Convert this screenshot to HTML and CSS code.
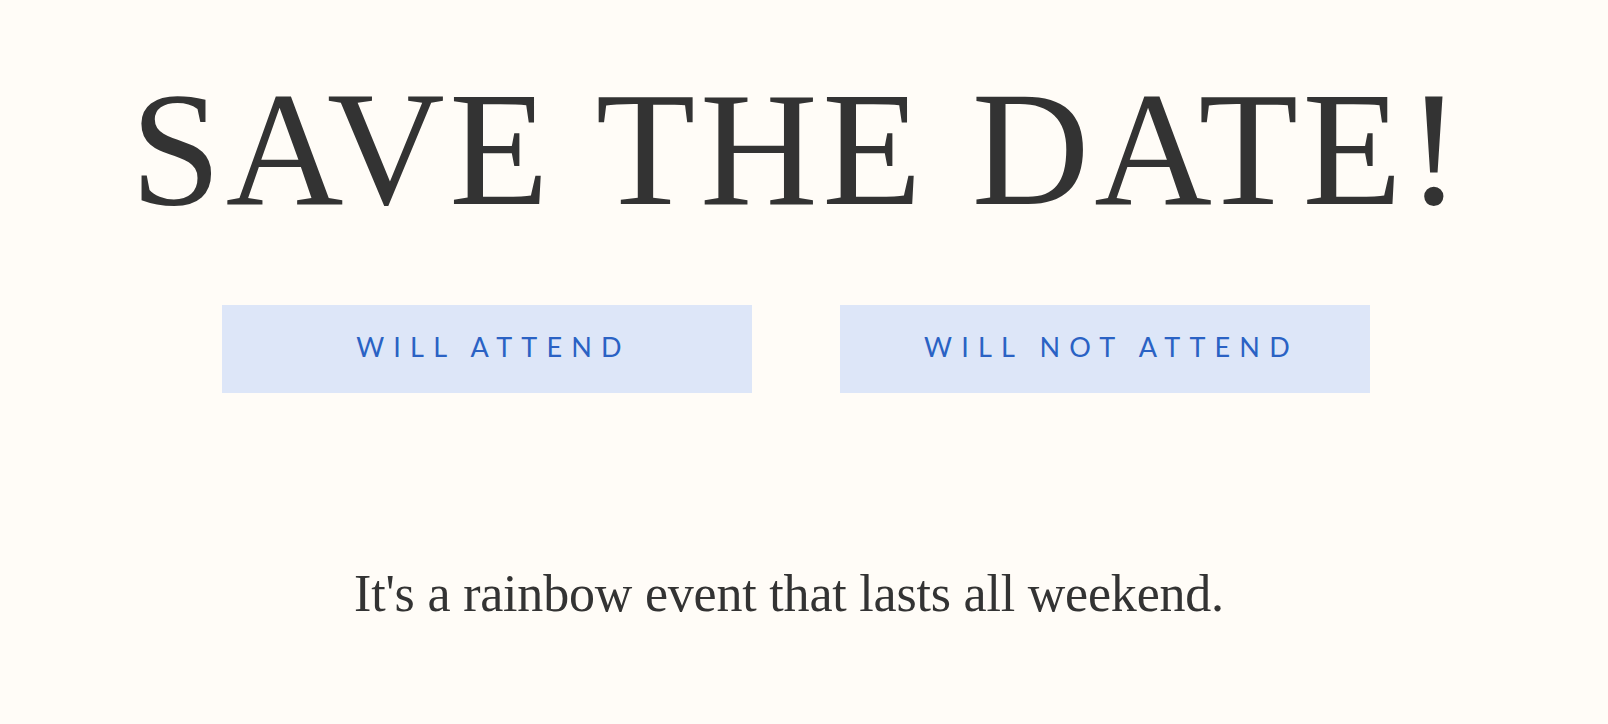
FILE: index.html
```html
<!DOCTYPE html>
<html lang="en">
<head>
<meta charset="utf-8">
<title>Save the Date</title>
<link rel="stylesheet" href="styles.css">
</head>
<body>
<main class="page">
  <h1 class="title">SAVE THE DATE!</h1>
  <div class="actions">
    <button class="rsvp">WILL ATTEND</button>
    <button class="rsvp">WILL NOT ATTEND</button>
  </div>
  <p class="tagline">It's a rainbow event that lasts all weekend.</p>
</main>
</body>
</html>
```
FILE: styles.css
```css
html, body {
  margin: 0;
  padding: 0;
  background: #fffcf7;
}
.page {
  display: flex;
  flex-direction: column;
  align-items: center;
  color: #333333;
  height: 724px;
  padding-right: 16px;
}
.title {
  margin: 59px 0 0;
  padding-left: 4px;
  font-family: "Liberation Serif", "Times New Roman", serif;
  font-weight: 400;
  font-size: 163px;
  line-height: 180px;
  letter-spacing: 4.6px;
}
.actions {
  display: flex;
  gap: 88px;
  margin-top: 66px;
}
.rsvp {
  width: 530px;
  height: 88px;
  border: none;
  background: #dde6f8;
  color: #2a62c4;
  font-family: Lato, "Noto Sans", sans-serif;
  font-size: 27px;
  letter-spacing: 9.2px;
  padding: 0 0 6px 13px;
}
.tagline {
  margin: 171px 0 0;
  padding-right: 14px;
  font-family: "Liberation Serif", serif;
  font-size: 52px;
  line-height: 60px;
  letter-spacing: -0.2px;
}
```
